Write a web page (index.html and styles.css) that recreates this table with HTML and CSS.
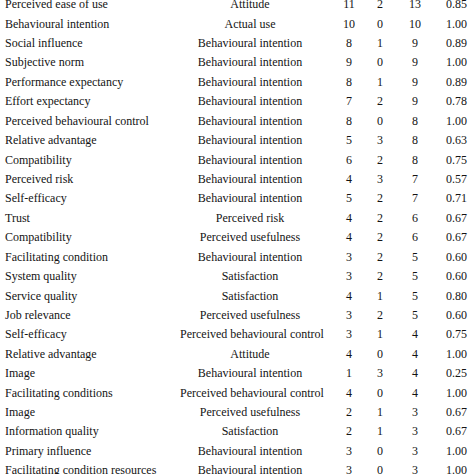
FILE: index.html
```html
<!DOCTYPE html>
<html lang="en">
<head>
<meta charset="utf-8">
<title>Relationships table</title>
<link rel="stylesheet" href="styles.css">
</head>
<body>
<div class="table">
  <div class="row"><span class="c1">Perceived ease of use</span><span class="c2">Attitude</span><span class="c3">11</span><span class="c4">2</span><span class="c5">13</span><span class="c6">0.85</span></div>
  <div class="row"><span class="c1">Behavioural intention</span><span class="c2">Actual use</span><span class="c3">10</span><span class="c4">0</span><span class="c5">10</span><span class="c6">1.00</span></div>
  <div class="row"><span class="c1">Social influence</span><span class="c2">Behavioural intention</span><span class="c3">8</span><span class="c4">1</span><span class="c5">9</span><span class="c6">0.89</span></div>
  <div class="row"><span class="c1">Subjective norm</span><span class="c2">Behavioural intention</span><span class="c3">9</span><span class="c4">0</span><span class="c5">9</span><span class="c6">1.00</span></div>
  <div class="row"><span class="c1">Performance expectancy</span><span class="c2">Behavioural intention</span><span class="c3">8</span><span class="c4">1</span><span class="c5">9</span><span class="c6">0.89</span></div>
  <div class="row"><span class="c1">Effort expectancy</span><span class="c2">Behavioural intention</span><span class="c3">7</span><span class="c4">2</span><span class="c5">9</span><span class="c6">0.78</span></div>
  <div class="row"><span class="c1">Perceived behavioural control</span><span class="c2">Behavioural intention</span><span class="c3">8</span><span class="c4">0</span><span class="c5">8</span><span class="c6">1.00</span></div>
  <div class="row"><span class="c1">Relative advantage</span><span class="c2">Behavioural intention</span><span class="c3">5</span><span class="c4">3</span><span class="c5">8</span><span class="c6">0.63</span></div>
  <div class="row"><span class="c1">Compatibility</span><span class="c2">Behavioural intention</span><span class="c3">6</span><span class="c4">2</span><span class="c5">8</span><span class="c6">0.75</span></div>
  <div class="row"><span class="c1">Perceived risk</span><span class="c2">Behavioural intention</span><span class="c3">4</span><span class="c4">3</span><span class="c5">7</span><span class="c6">0.57</span></div>
  <div class="row"><span class="c1">Self-efficacy</span><span class="c2">Behavioural intention</span><span class="c3">5</span><span class="c4">2</span><span class="c5">7</span><span class="c6">0.71</span></div>
  <div class="row"><span class="c1">Trust</span><span class="c2">Perceived risk</span><span class="c3">4</span><span class="c4">2</span><span class="c5">6</span><span class="c6">0.67</span></div>
  <div class="row"><span class="c1">Compatibility</span><span class="c2">Perceived usefulness</span><span class="c3">4</span><span class="c4">2</span><span class="c5">6</span><span class="c6">0.67</span></div>
  <div class="row"><span class="c1">Facilitating condition</span><span class="c2">Behavioural intention</span><span class="c3">3</span><span class="c4">2</span><span class="c5">5</span><span class="c6">0.60</span></div>
  <div class="row"><span class="c1">System quality</span><span class="c2">Satisfaction</span><span class="c3">3</span><span class="c4">2</span><span class="c5">5</span><span class="c6">0.60</span></div>
  <div class="row"><span class="c1">Service quality</span><span class="c2">Satisfaction</span><span class="c3">4</span><span class="c4">1</span><span class="c5">5</span><span class="c6">0.80</span></div>
  <div class="row"><span class="c1">Job relevance</span><span class="c2">Perceived usefulness</span><span class="c3">3</span><span class="c4">2</span><span class="c5">5</span><span class="c6">0.60</span></div>
  <div class="row"><span class="c1">Self-efficacy</span><span class="c2">Perceived behavioural control</span><span class="c3">3</span><span class="c4">1</span><span class="c5">4</span><span class="c6">0.75</span></div>
  <div class="row"><span class="c1">Relative advantage</span><span class="c2">Attitude</span><span class="c3">4</span><span class="c4">0</span><span class="c5">4</span><span class="c6">1.00</span></div>
  <div class="row"><span class="c1">Image</span><span class="c2">Behavioural intention</span><span class="c3">1</span><span class="c4">3</span><span class="c5">4</span><span class="c6">0.25</span></div>
  <div class="row"><span class="c1">Facilitating conditions</span><span class="c2">Perceived behavioural control</span><span class="c3">4</span><span class="c4">0</span><span class="c5">4</span><span class="c6">1.00</span></div>
  <div class="row"><span class="c1">Image</span><span class="c2">Perceived usefulness</span><span class="c3">2</span><span class="c4">1</span><span class="c5">3</span><span class="c6">0.67</span></div>
  <div class="row"><span class="c1">Information quality</span><span class="c2">Satisfaction</span><span class="c3">2</span><span class="c4">1</span><span class="c5">3</span><span class="c6">0.67</span></div>
  <div class="row"><span class="c1">Primary influence</span><span class="c2">Behavioural intention</span><span class="c3">3</span><span class="c4">0</span><span class="c5">3</span><span class="c6">1.00</span></div>
  <div class="row"><span class="c1">Facilitating condition resources</span><span class="c2">Behavioural intention</span><span class="c3">3</span><span class="c4">0</span><span class="c5">3</span><span class="c6">1.00</span></div>
</div>
</body>
</html>
```

FILE: styles.css
```css
html, body {
  margin: 0;
  padding: 0;
  background: #ffffff;
  overflow: hidden;
}

.table {
  margin-top: -4.8px;
  padding-left: 5px;
  font-family: "Liberation Serif", "Times New Roman", serif;
  font-size: 12px;
  line-height: 19.42px;
  color: #141414;
}

.row {
  display: grid;
  grid-template-columns: 175px 140px 44px 32px 38px 33px;
  white-space: nowrap;
}

.c1 {
  text-align: left;
}

.c2 {
  text-align: center;
}

.c3 {
  padding-left: 14px;
  text-align: center;
}

.c4,
.c5 {
  text-align: center;
}

.c6 {
  text-align: right;
}
```
